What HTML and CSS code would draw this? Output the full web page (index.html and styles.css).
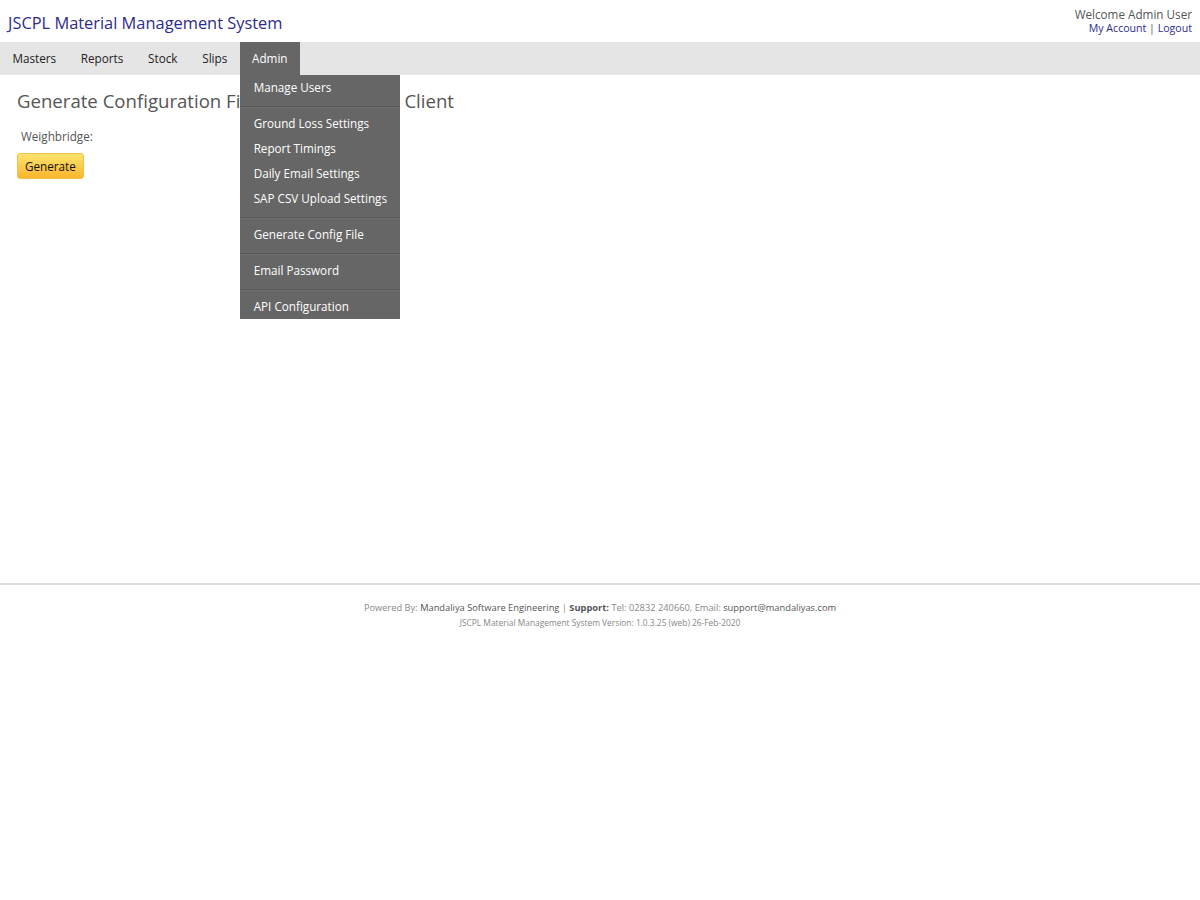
FILE: index.html
```html
<!DOCTYPE html>
<html lang="en">
<head>
    <meta charset="UTF-8">
    <title>JSCPL Material Management System</title>
    <link rel="stylesheet" href="styles.css">
</head>
<body>
    <header class="top">
        <div class="site-title">JSCPL Material Management System</div>
        <div class="user-box">
            <div>Welcome Admin User</div>
            <div><a href="#">My Account</a> | <a href="#">Logout</a></div>
        </div>
    </header>
    <nav class="menu">
        <ul>
            <li><a href="#">Masters</a></li>
            <li><a href="#">Reports</a></li>
            <li><a href="#">Stock</a></li>
            <li><a href="#">Slips</a></li>
            <li class="open">
                <a href="#">Admin</a>
                <!-- Admin dropdown -->
                <ul class="submenu">
                    <li><a href="#">Manage Users</a></li>
                    <li class="sep"></li>
                    <li><a href="#">Ground Loss Settings</a></li>
                    <li><a href="#">Report Timings</a></li>
                    <li><a href="#">Daily Email Settings</a></li>
                    <li><a href="#">SAP CSV Upload Settings</a></li>
                    <li class="sep"></li>
                    <li><a href="#">Generate Config File</a></li>
                    <li class="sep"></li>
                    <li><a href="#">Email Password</a></li>
                    <li class="sep"></li>
                    <li><a href="#">API Configuration</a></li>
                </ul>
            </li>
        </ul>
    </nav>
    <main class="content">
        <h2>Generate Configuration File for Weighbridge Client</h2>
        <form class="gen-form">
            <label>Weighbridge:</label>
            <button type="button" class="btn">Generate</button>
        </form>
    </main>
    <footer class="footer">
        <p>Powered By: <b class="n">Mandaliya Software Engineering</b> | <b>Support:</b> Tel: 02832 240660, Email: <span class="n">support@mandaliyas.com</span></p>
        <p class="ver">JSCPL Material Management System Version: 1.0.3.25 (web) 26-Feb-2020</p>
    </footer>
</body>
</html>
```

FILE: styles.css
```css
body {
    font-family: "Open Sans", Arial, sans-serif;
    margin: 0;
    padding: 0;
    background-color: #fff;
    color: #555;
    font-size: 11.7px;
}

a {
    text-decoration: none;
}

.top {
    display: flex;
    justify-content: space-between;
    height: 42px;
    padding: 0 8px;
}

.site-title {
    color: #2c2c8c;
    font-size: 16.4px;
    padding-top: 11px;
}

.user-box {
    text-align: right;
    padding-top: 7px;
    line-height: 15px;
}

.user-box a {
    color: #2c2c8c;
}

.user-box div:last-child {
    font-size: 10.6px;
    line-height: 13px;
}

.menu {
    background-color: #e5e5e5;
    height: 33px;
}

.menu ul {
    list-style: none;
    margin: 0;
    padding: 0;
}

.menu > ul {
    display: flex;
}

.menu > ul > li {
    position: relative;
}

.menu > ul > li > a {
    display: block;
    padding: 0 12.4px;
    line-height: 33px;
    color: #222;
}

.menu li.open > a {
    background-color: #666;
    color: #fff;
}

.submenu {
    position: absolute;
    top: 33px;
    left: 0;
    width: 160px;
    background-color: #666;
    z-index: 10;
}

.submenu a {
    display: block;
    color: #fff;
    padding: 0 14px;
    line-height: 25px;
    white-space: nowrap;
}

.submenu .sep {
    border-top: 1px solid #575757;
    border-bottom: 1px solid #6f6f6f;
    margin: 6px 0 3px;
}

.content {
    padding: 0 17px;
    min-height: 495px;
}

.content h2 {
    font-weight: normal;
    font-size: 18.6px;
    margin: 13px 0 15px;
}

.gen-form label {
    display: block;
    padding-left: 4px;
    margin-bottom: 9px;
}

.btn {
    font-family: "Open Sans", Arial, sans-serif;
    font-size: 11.7px;
    color: #111;
    background: linear-gradient(#fde46e, #fbb52c);
    border: 1px solid #f2c14a;
    border-radius: 3px;
    padding: 4px 7px 4px;
    cursor: pointer;
}

.footer {
    border-top: 2px solid #ddd;
    text-align: center;
    color: #888;
    font-size: 9.3px;
    padding-top: 16px;
}

.footer p {
    margin: 0 0 3px;
}

.footer .n,
.footer b {
    color: #555;
}

.footer b.n {
    font-weight: normal;
}

.footer .ver {
    font-size: 8.4px;
}
```
